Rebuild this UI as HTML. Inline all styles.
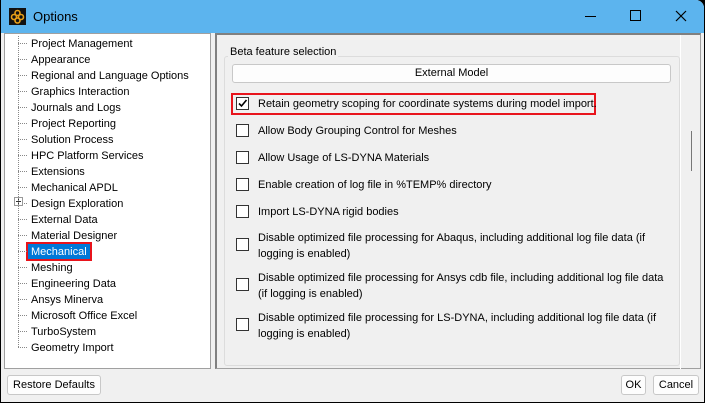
<!DOCTYPE html><html><head><style>
*{margin:0;padding:0;box-sizing:border-box}
body{width:705px;height:403px;overflow:hidden;background:#000;font-family:"Liberation Sans",sans-serif;font-size:11px;color:#000}
#win{position:absolute;left:1px;top:0;width:703px;height:402px;background:#f0f0f0;border-radius:0 8px 0 0;overflow:hidden}
#title{position:absolute;left:0;top:0;width:703px;height:33px;background:#5cb4ee}
.a{position:absolute;white-space:nowrap}
#tree{position:absolute;left:3px;top:33px;width:207px;height:336px;background:#fff;border:1px solid #a0a0a0}
#right{position:absolute;left:214px;top:33px;width:486px;height:336px;border:1px solid #a0a0a0;border-top:2px solid #808080;border-left:2px solid #808080;background:#f0f0f0}
.cb{position:absolute;left:235px;width:13px;height:13px;border:1px solid #333;background:#fff}
.lbl{position:absolute;left:257px;font-size:11px;line-height:16px}
.btn{position:absolute;background:#fdfdfd;border:1px solid #c8c8c8;border-radius:3px;text-align:center;font-size:11px}
</style></head><body><div id="win">
<div id="title">
<div class="a" style="left:8px;top:8px;width:17px;height:17px;background:#111"><svg width="17" height="17"><g fill="none" stroke="#e8a018" stroke-width="1.6"><circle cx="8.5" cy="5" r="2.5"/><circle cx="5" cy="9" r="2.5"/><circle cx="12" cy="9" r="2.5"/><circle cx="8.5" cy="12.5" r="2.5"/></g></svg></div>
<div class="a" style="left:32px;top:9px;font-size:13px">Options</div>
<div class="a" style="left:584px;top:16px;width:11px;border-top:1px solid #000"></div>
<div class="a" style="left:629px;top:10px;width:11px;height:11px;border:1px solid #000"></div>
<svg class="a" style="left:674px;top:10px" width="12" height="12"><path d="M1 1L11 11M11 1L1 11" stroke="#000" stroke-width="1.2"/></svg>
</div>
<div id="tree"></div>
<div id="right">
<div class="a" style="left:463px;top:0;width:1px;height:334px;background:#fff"></div>
<div class="a" style="left:474px;top:96px;width:1px;height:40px;background:#777"></div>
<div class="a" style="left:7px;top:21px;width:456px;height:310px;border:1px solid #dcdcdc;border-radius:3px"></div>
</div>
<div class="a" style="left:227px;top:46px;font-size:11px;background:#f0f0f0;padding:0 2px">Beta feature selection</div>
<div class="btn" style="left:231px;top:64px;width:439px;height:19px;line-height:17px">External Model</div>
<div class="a" style="left:230px;top:93px;width:365px;height:22px;border:2px solid #e8141c"></div>
<div class="cb" style="top:97px"><svg width="11" height="11" style="position:absolute;left:0;top:0"><path d="M2 5.5L4.5 8L9.5 2" stroke="#000" stroke-width="1.6" fill="none"/></svg></div>
<div class="lbl" style="top:96px">Retain geometry scoping for coordinate systems during model import.</div>
<div class="cb" style="top:124px"></div><div class="lbl" style="top:123px">Allow Body Grouping Control for Meshes</div>
<div class="cb" style="top:151px"></div><div class="lbl" style="top:150px">Allow Usage of LS-DYNA Materials</div>
<div class="cb" style="top:178px"></div><div class="lbl" style="top:177px">Enable creation of log file in %TEMP% directory</div>
<div class="cb" style="top:205px"></div><div class="lbl" style="top:204px">Import LS-DYNA rigid bodies</div>
<div class="cb" style="top:238px"></div><div class="lbl" style="top:230px">Disable optimized file processing for Abaqus, including additional log file data (if<br>logging is enabled)</div>
<div class="cb" style="top:278px"></div><div class="lbl" style="top:270px">Disable optimized file processing for Ansys cdb file, including additional log file data<br>(if logging is enabled)</div>
<div class="cb" style="top:318px"></div><div class="lbl" style="top:310px">Disable optimized file processing for LS-DYNA, including additional log file data (if<br>logging is enabled)</div>
<div class="btn" style="left:6px;top:375px;width:94px;height:20px;line-height:18px">Restore Defaults</div>
<div class="btn" style="left:620px;top:375px;width:25px;height:20px;line-height:18px">OK</div>
<div class="btn" style="left:652px;top:375px;width:46px;height:20px;line-height:18px">Cancel</div>
<div class="a" style="left:13px;top:197px;width:9px;height:9px;border:1px solid #999;background:#fff"><div style="position:absolute;left:1px;top:3px;width:5px;border-top:1px solid #333"></div><div style="position:absolute;left:3px;top:1px;height:5px;border-left:1px solid #333"></div></div>
<div class="a" style="left:25px;top:242px;width:66px;height:19px;border:2px solid #e8141c;background:#0078d7"></div>
<div class="a" style="left:30px;top:36px;font-size:11px;line-height:16px">Project Management<br>Appearance<br>Regional and Language Options<br>Graphics Interaction<br>Journals and Logs<br>Project Reporting<br>Solution Process<br>HPC Platform Services<br>Extensions<br>Mechanical APDL<br>Design Exploration<br>External Data<br>Material Designer<br><span style="color:#fff">Mechanical</span><br>Meshing<br>Engineering Data<br>Ansys Minerva<br>Microsoft Office Excel<br>TurboSystem<br>Geometry Import</div>
<svg class="a" style="left:17px;top:36px" width="12" height="320"><g stroke="#888" stroke-dasharray="1 1"><line x1="0.5" y1="0" x2="0.5" y2="312"/><line x1="0" y1="7.5" x2="10" y2="7.5"/><line x1="0" y1="23.5" x2="10" y2="23.5"/><line x1="0" y1="39.5" x2="10" y2="39.5"/><line x1="0" y1="55.5" x2="10" y2="55.5"/><line x1="0" y1="71.5" x2="10" y2="71.5"/><line x1="0" y1="87.5" x2="10" y2="87.5"/><line x1="0" y1="103.5" x2="10" y2="103.5"/><line x1="0" y1="119.5" x2="10" y2="119.5"/><line x1="0" y1="135.5" x2="10" y2="135.5"/><line x1="0" y1="151.5" x2="10" y2="151.5"/><line x1="6" y1="167.5" x2="10" y2="167.5"/><line x1="0" y1="183.5" x2="10" y2="183.5"/><line x1="0" y1="199.5" x2="10" y2="199.5"/><line x1="0" y1="215.5" x2="10" y2="215.5"/><line x1="0" y1="231.5" x2="10" y2="231.5"/><line x1="0" y1="247.5" x2="10" y2="247.5"/><line x1="0" y1="263.5" x2="10" y2="263.5"/><line x1="0" y1="279.5" x2="10" y2="279.5"/><line x1="0" y1="295.5" x2="10" y2="295.5"/><line x1="0" y1="311.5" x2="10" y2="311.5"/></g></svg>
</div></body></html>
